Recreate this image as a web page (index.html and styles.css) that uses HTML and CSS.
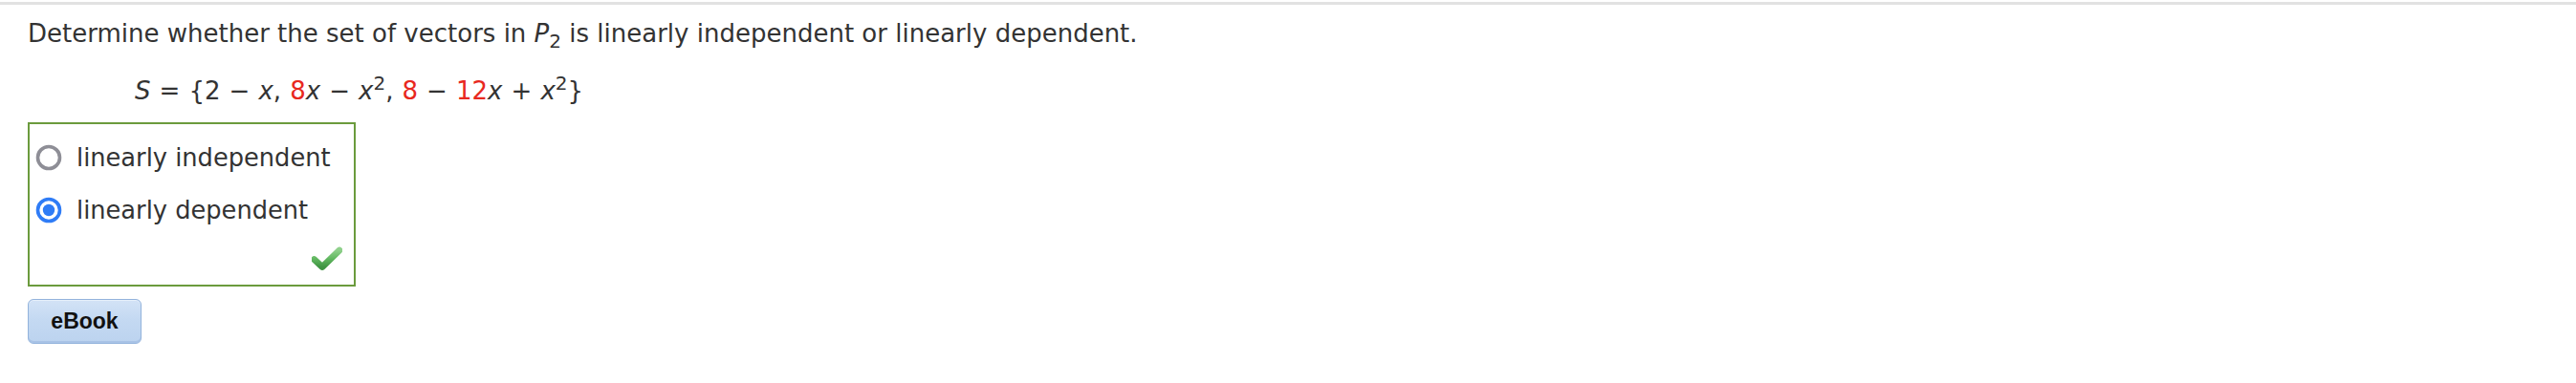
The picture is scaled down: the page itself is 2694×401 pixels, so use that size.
FILE: index.html
```html
<!DOCTYPE html>
<html>
<head>
<meta charset="utf-8">
<link rel="stylesheet" href="styles.css">
</head>
<body>
<div class="topline"></div>
<div class="page">
  <p class="question">Determine whether the set of vectors in <i>P</i><sub class="sub">2</sub> is linearly independent or linearly dependent.</p>
  <p class="formula"><i>S</i> = {2 − <i>x</i>, <span class="red">8</span><i>x</i> − <i>x</i><sup class="sup">2</sup>, <span class="red">8</span> − <span class="red">12</span><i>x</i> + <i>x</i><sup class="sup">2</sup>}</p>
  <div class="answer">
    <label class="option">
      <svg class="radio" viewBox="0 0 28 28"><circle cx="14" cy="14" r="11.5" fill="#fff" stroke="#8e8e96" stroke-width="3.6"/></svg>
      <span>linearly independent</span>
    </label>
    <label class="option">
      <svg class="radio" viewBox="0 0 28 28"><circle cx="14" cy="14" r="11.5" fill="#fff" stroke="#2f7cf6" stroke-width="3.6"/><circle cx="14" cy="14" r="6.2" fill="#2f7cf6"/></svg>
      <span>linearly dependent</span>
    </label>
    <div class="mark">
      <svg class="check" viewBox="0 0 32 26">
        <defs>
          <linearGradient id="g" x1="0" y1="0" x2="0" y2="1">
            <stop offset="0" stop-color="#8fd08b"/>
            <stop offset="0.5" stop-color="#62b861"/>
            <stop offset="1" stop-color="#3f9442"/>
          </linearGradient>
        </defs>
        <path d="M2.5 13.5 L11 21.5 L29 4" fill="none" stroke="url(#g)" stroke-width="6.8" stroke-linecap="round" stroke-linejoin="round"/>
      </svg>
    </div>
  </div>
  <button class="ebook">eBook</button>
</div>
</body>
</html>
```

FILE: styles.css
```css
html, body {
  margin: 0;
  padding: 0;
  background: #ffffff;
}

.topline {
  margin-top: 2px;
  height: 3px;
  background: #e2e2e2;
}

.page {
  padding-left: 29px;
  font-family: "DejaVu Sans", Verdana, sans-serif;
  color: #333333;
  font-size: 26px;
}

.question {
  margin: 15px 0 0 0;
  line-height: 30px;
}

.sub {
  font-size: 20px;
  vertical-align: -6px;
  line-height: 0;
}

.formula {
  margin: 30px 0 0 112px;
  line-height: 30px;
  word-spacing: 0.8px;
}

.sup {
  font-size: 20px;
  vertical-align: 10px;
  line-height: 0;
}

.red {
  color: #e8281e;
}

.answer {
  margin-top: 18px;
  width: 339px;
  border: 2px solid #6b9b3d;
  padding: 7px 0 14px 0;
  display: flex;
  flex-direction: column;
}

.option {
  display: flex;
  align-items: center;
  height: 55px;
  padding-left: 6px;
  gap: 15px;
  font-size: 25.7px;
}

.radio {
  width: 28px;
  height: 28px;
  flex: none;
}

.mark {
  display: flex;
  justify-content: flex-end;
  padding-right: 12px;
  margin-top: 11px;
}

.check {
  width: 32px;
  height: 26px;
}

.ebook {
  display: block;
  margin-top: 13px;
  width: 119px;
  height: 47px;
  border: 1px solid #93b3dc;
  border-radius: 6px;
  background: linear-gradient(#d3e3f6 0%, #c4d9f2 45%, #bcd3ef 100%);
  box-shadow: inset 0 -2px 0 #a9c3e6, inset 0 1px 0 #e6f0fb;
  font-family: "Liberation Sans", Arial, sans-serif;
  font-weight: bold;
  font-size: 23px;
  color: #111111;
  padding: 0;
}
```
